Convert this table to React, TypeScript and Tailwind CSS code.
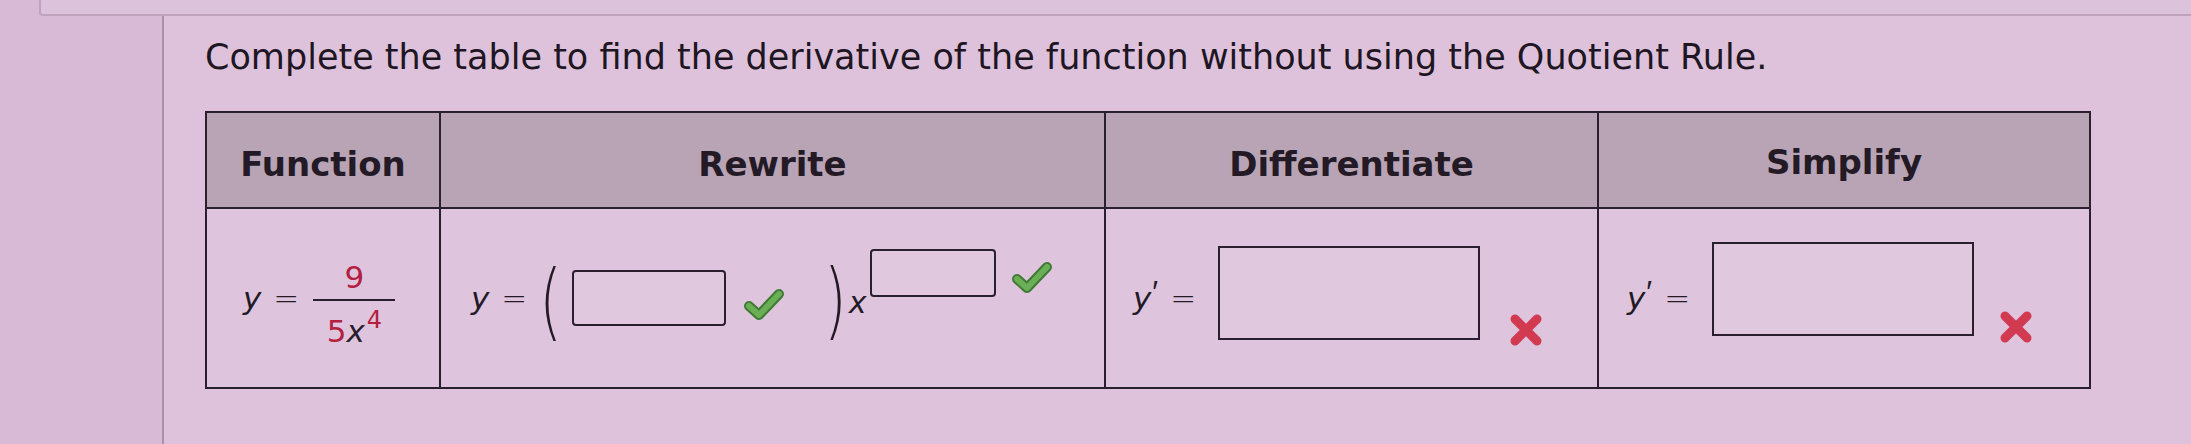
import React from "react";

const Check = () => (
  <svg width="40" height="32" viewBox="0 0 40 32" className="shrink-0">
    <path d="M5 18 L15 27 L35 6" fill="none" stroke="#3f7a35" strokeWidth="10" strokeLinecap="round" strokeLinejoin="round" />
    <path d="M5 18 L15 27 L35 6" fill="none" stroke="#6aae55" strokeWidth="6" strokeLinecap="round" strokeLinejoin="round" />
  </svg>
);

const Cross = () => (
  <svg width="36" height="34" viewBox="0 0 36 34" className="shrink-0">
    <path d="M7 6 L29 28 M29 6 L7 28" fill="none" stroke="#d23a52" strokeWidth="9" strokeLinecap="round" />
  </svg>
);

const mathFont = { fontFamily: '"DejaVu Sans", "Liberation Sans", sans-serif' };

const YPrime = () => (
  <span className="whitespace-nowrap">
    <span className="italic">y</span>
    <span className="font-light relative -top-[6px] ml-[1px]">′</span>
  </span>
);

export default function App() {
  return (
    <div
      className="w-[2191px] h-[444px] bg-[#d8b9d6] flex flex-col overflow-hidden text-[#231a26]"
      style={{ fontFamily: '"DejaVu Sans", "Liberation Sans", sans-serif' }}
    >
      <div className="h-[16px] ml-[39px] bg-[#dcc2da] border-b-2 border-l-2 border-[#bfa2bb] rounded-bl-[4px] shrink-0" />
      <div className="flex flex-1">
        <div className="w-[162px] shrink-0" />
        <div className="flex-1 border-l-2 border-[#ab8ea8] bg-[#dec2dc] pl-[41px] pt-[20px]">
          <div className="text-[35px] leading-[42px] text-[#1e1622] whitespace-nowrap">
            Complete the table to find the derivative of the function without using the Quotient Rule.
          </div>
          <div className="mt-[33px] w-[1886px] border-2 border-[#2a1f2e]">
            <div className="grid grid-cols-[234px_665px_493px_490px] bg-[#b8a4b5] h-[96px] border-b-2 border-[#2a1f2e]">
              <div className="flex items-center justify-center pt-[8px] font-bold text-[34px] border-r-2 border-[#2a1f2e]">Function</div>
              <div className="flex items-center justify-center pt-[8px] font-bold text-[34px] border-r-2 border-[#2a1f2e]">Rewrite</div>
              <div className="flex items-center justify-center pt-[8px] font-bold text-[34px] border-r-2 border-[#2a1f2e]">Differentiate</div>
              <div className="flex items-center justify-center pt-[4px] font-bold text-[34px]">Simplify</div>
            </div>
            <div className="grid grid-cols-[234px_665px_493px_490px] h-[178px] bg-[#dec4dd]">
              {/* Function */}
              <div className="flex items-center pl-[36px] border-r-2 border-[#2a1f2e] text-[31px]" style={mathFont}>
                <span className="italic">y</span>
                <span className="ml-[12px] font-light">=</span>
                <span className="ml-[14px] mt-[14px] inline-flex flex-col items-center text-[#b3203f]">
                  <span className="leading-[36px] pb-[4px]">9</span>
                  <span className="w-[82px] h-[2px] bg-[#2a1f2e]" />
                  <span className="leading-[36px] pt-[12px] whitespace-nowrap">
                    5<span className="italic text-[#2a1f2e]">x</span>
                    <span className="text-[24px] relative -top-[14px] ml-[2px]">4</span>
                  </span>
                </span>
              </div>
              {/* Rewrite */}
              <div className="flex items-center pl-[30px] border-r-2 border-[#2a1f2e] text-[31px]" style={mathFont}>
                <span className="italic">y</span>
                <span className="ml-[12px] font-light">=</span>
                <span className="ml-[12px] text-[58px] font-extralight leading-none mt-[6px] scale-y-[1.45] inline-block">(</span>
                <div className="ml-[10px] w-[154px] h-[56px] border-2 border-[#2a1f2e] rounded-[4px] bg-[#e0c8df]" />
                <div className="ml-[18px] mt-[12px]"><Check /></div>
                <span className="ml-[40px] text-[58px] font-extralight leading-none mt-[4px] scale-y-[1.45] inline-block">)</span>
                <span className="italic text-[30px] ml-[2px] mt-[8px]">x</span>
                <div className="self-start mt-[40px] ml-[4px] w-[126px] h-[48px] border-2 border-[#2a1f2e] rounded-[4px] bg-[#e0c8df]" />
                <div className="self-start mt-[52px] ml-[16px]"><Check /></div>
              </div>
              {/* Differentiate */}
              <div className="flex items-center pl-[27px] border-r-2 border-[#2a1f2e] text-[31px]" style={mathFont}>
                <YPrime />
                <span className="ml-[12px] font-light">=</span>
                <div className="ml-[22px] w-[262px] h-[94px] border-2 border-[#2a1f2e] bg-[#e0c8df] -mt-[10px]" />
                <div className="ml-[28px] mt-[64px]"><Cross /></div>
              </div>
              {/* Simplify */}
              <div className="flex items-center pl-[28px] text-[31px]" style={mathFont}>
                <YPrime />
                <span className="ml-[12px] font-light">=</span>
                <div className="ml-[22px] w-[262px] h-[94px] border-2 border-[#2a1f2e] bg-[#e0c8df] -mt-[18px]" />
                <div className="ml-[24px] mt-[58px]"><Cross /></div>
              </div>
            </div>
          </div>
        </div>
      </div>
    </div>
  );
}
